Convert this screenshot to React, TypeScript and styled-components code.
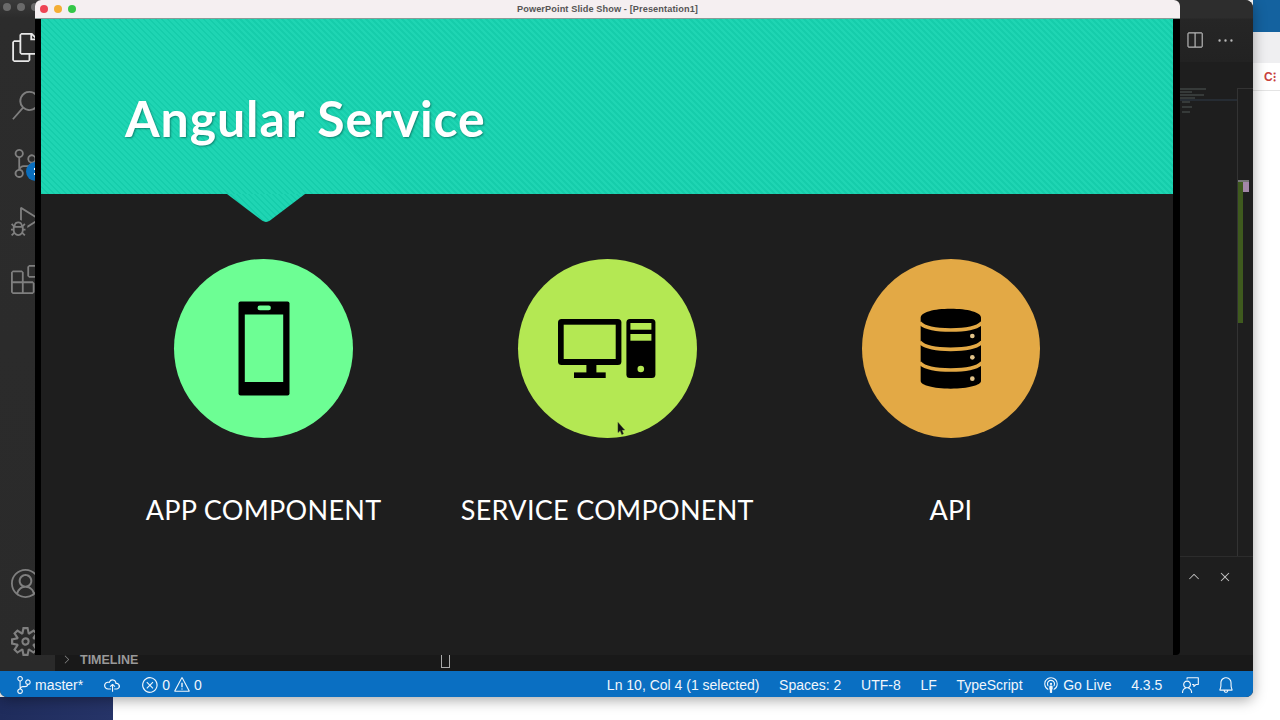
import React from "react";
import styled, { createGlobalStyle } from "styled-components";
import {
  VscFiles, VscSearch, VscSourceControl, VscDebugAlt, VscExtensions, VscAccount, VscSettingsGear,
  VscSplitHorizontal, VscEllipsis, VscChevronUp, VscClose, VscChevronRight, VscCloudUpload,
  VscError, VscWarning, VscBroadcast, VscFeedback, VscBell,
} from "react-icons/vsc";

const Global = createGlobalStyle`
  html, body { margin: 0; padding: 0; background: #fff; overflow: hidden; }
  #root { width: 1280px; height: 720px; }
`;

const Desktop = styled.div`
  position: relative;
  width: 1280px;
  height: 720px;
  overflow: hidden;
  background: #fff;
  font-family: "Liberation Sans", Arial, sans-serif;
`;

const DockCorner = styled.div`
  position: absolute;
  left: 0;
  bottom: 0;
  width: 113px;
  height: 23px;
  background: linear-gradient(90deg, #1f2c5c, #263468);
`;

const BrowserSliver = styled.div`
  position: absolute;
  left: 1253px;
  top: 0;
  width: 27px;
  height: 720px;
  display: flex;
  flex-direction: column;
`;
const BrowserTop = styled.div`
  height: 32px;
  background: #14629f;
`;
const BrowserToolbar = styled.div`
  height: 31px;
  background: #efeff1;
`;
const BrowserTab = styled.div`
  height: 27px;
  padding-left: 11px;
  border-bottom: 1px solid #e4e4e4;
  display: flex;
  align-items: center;
  font-size: 12px;
  font-weight: 700;
  color: #c8403c;
`;

const CodeWindow = styled.div`
  position: absolute;
  left: 0;
  top: 0;
  width: 1253px;
  height: 697px;
  display: flex;
  flex-direction: column;
  border-radius: 0 8px 7px 7px;
  overflow: hidden;
  background: #1e1e1e;
  box-shadow: 0 3px 14px rgba(0, 0, 0, 0.35);
`;
const CodeBody = styled.div`
  flex: 1;
  min-height: 0;
  display: flex;
`;
const ActivityBar = styled.nav`
  width: 55px;
  flex: none;
  display: flex;
  flex-direction: column;
  background: linear-gradient(180deg, #3a3a3a 0, #2c2c2c 18px, #2a2a2a 100%);
  padding: 33px 5px 15px 0;
  box-sizing: border-box;
  align-items: center;
`;
const ControlDots = styled.div`
  display: flex;
  gap: 6px;
  position: absolute;
  left: 3px;
  top: 3px;
`;
const GreyDot = styled.span`
  width: 8px;
  height: 8px;
  border-radius: 50%;
  background: #6a6a6a;
`;
const ActivityGroup = styled.div`
  display: flex;
  flex-direction: column;
  gap: 29px;
`;
const ActivitySpacer = styled.div`
  flex: 1;
`;
const ActivityIcon = styled.div<{ $active?: boolean }>`
  position: relative;
  width: 29px;
  height: 29px;
  color: ${(p) => (p.$active ? "#e8e8e8" : "#7f7f7f")};
  font-size: 29px;
  line-height: 0;
`;
const Badge = styled.span`
  position: absolute;
  left: 15px;
  top: 13px;
  width: 19px;
  height: 19px;
  border-radius: 50%;
  background: #0a6ebd;
  &::after {
    content: "";
    position: absolute;
    left: 8px;
    top: 6px;
    width: 2px;
    height: 2px;
    background: #fff;
    box-shadow: 0 5px 0 #fff;
  }
`;
const Workbench = styled.div`
  flex: 1;
  min-width: 0;
  display: flex;
  flex-direction: column;
`;
const TabStrip = styled.div`
  height: 62px;
  flex: none;
  box-sizing: border-box;
  padding: 18px 18px 0 0;
  display: flex;
  justify-content: flex-end;
  align-items: center;
  gap: 12px;
  color: #b8b8b8;
  font-size: 19px;
  background: linear-gradient(180deg, #2d2d2d 0, #2d2d2d 18px, #262626 19px, #222 62px);
`;
const EditorRow = styled.div`
  flex: 1;
  min-height: 0;
  display: flex;
  justify-content: flex-end;
  padding-top: 26px;
  background: #1e1e1e;
`;
const Minimap = styled.svg`
  width: 57px;
  height: 40px;
  flex: none;
`;
const ScrollTrack = styled.div`
  width: 16px;
  flex: none;
  box-sizing: border-box;
  border-left: 1px solid #333;
  border-top: 1px solid #333;
  padding-top: 91px;
  display: flex;
  align-items: flex-start;
`;
const OverviewBar = styled.div`
  width: 5px;
  height: 141px;
  background: #3f5a1e;
  border-top: 2px solid #777;
`;
const OverviewMark = styled.div`
  width: 6px;
  height: 10px;
  background: #a387a8;
  border-top: 2px solid #777;
`;
const PanelRow = styled.div`
  height: 99px;
  flex: none;
  box-sizing: border-box;
  border-top: 1px solid #2c2c2c;
  padding: 12px 20px 0 0;
  display: flex;
  justify-content: flex-end;
  gap: 15px;
  color: #c2c2c2;
  font-size: 16px;
  background: #1e1e1e;
`;
const TimelineRow = styled.div`
  height: 16px;
  flex: none;
  display: flex;
  align-items: center;
  padding-left: 5px;
  background: #191919;
  overflow: hidden;
`;
const TimelineChevron = styled.span`
  color: #888;
  font-size: 13px;
  line-height: 0;
  margin-top: -7px;
`;
const TimelineLabel = styled.span`
  margin: -7px 0 0 7px;
  font-size: 12.5px;
  font-weight: 700;
  color: #999;
`;
const TextCaret = styled.span`
  width: 7px;
  height: 12px;
  margin: -3px 0 0 303px;
  border: 1px solid #aaa;
  border-top: 0;
`;

const StatusBar = styled.footer`
  height: 26px;
  flex: none;
  box-sizing: border-box;
  display: flex;
  align-items: center;
  justify-content: space-between;
  background: #0a6fc2;
  color: #f1f6fb;
  font-size: 14px;
  padding: 1px 18px 0 15px;
`;
const StatusGroup = styled.div<{ $gap?: number }>`
  display: flex;
  align-items: center;
  gap: ${(p) => p.$gap ?? 19.7}px;
`;
const StatusItem = styled.span<{ $gap?: number; $font?: number }>`
  display: inline-flex;
  align-items: center;
  gap: ${(p) => p.$gap ?? 3}px;
  white-space: nowrap;
  svg { font-size: ${(p) => p.$font ?? 18}px; }
`;

const SlideWindow = styled.section`
  position: absolute;
  left: 35px;
  top: 0;
  width: 1145px;
  height: 655px;
  display: flex;
  flex-direction: column;
  background: #000;
  border-radius: 6px 6px 4px 0;
  overflow: hidden;
`;
const SlideTitleBar = styled.header`
  position: relative;
  height: 19px;
  flex: none;
  display: flex;
  align-items: center;
  justify-content: center;
  background: #f5eff1;
  border-bottom: 1px solid #8a9a96;
  box-sizing: border-box;
  font-size: 9.2px;
  font-weight: 700;
  color: #555;
  letter-spacing: 0.1px;
  padding-bottom: 1px;
`;
const Lights = styled.div`
  position: absolute;
  left: 5px;
  top: 5px;
  display: flex;
  gap: 6px;
`;
const Light = styled.span<{ $color: string }>`
  width: 8px;
  height: 8px;
  border-radius: 50%;
  background: ${(p) => p.$color};
`;
const Slide = styled.div`
  flex: 1;
  min-height: 0;
  margin: 0 7px 0 6px;
  display: flex;
  flex-direction: column;
  background: #1e1e1e;
`;
const stripes = `repeating-linear-gradient(45deg, #16cdab 0, #16cdab 2.1px, #1fd5b3 2.1px, #1fd5b3 4.243px)`;
const SlideHeader = styled.div`
  position: relative;
  height: 175px;
  flex: none;
  box-sizing: border-box;
  padding: 65px 0 0 84px;
  background: ${stripes};
`;
const SlideHeaderPointer = styled.div`
  position: absolute;
  left: 186px;
  top: 175px;
  width: 78px;
  height: 28px;
  background: ${stripes};
  clip-path: polygon(0 0, 100% 0, 43px 26.6px, 41px 27.6px, 39px 28px, 37px 27.6px, 35px 26.6px);
`;
const SlideTitle = styled.h1`
  margin: 0;
  font-family: Lato, "Liberation Sans", sans-serif;
  font-size: 50px;
  line-height: 68px;
  font-weight: 700;
  color: #fff;
  letter-spacing: 0.9px;
  text-shadow: 1px 1px 2px rgba(0, 70, 60, 0.55);
`;
const Columns = styled.div`
  display: grid;
  grid-template-columns: repeat(3, 343.7px);
  padding: 65px 0 0 50.8px;
`;
const Column = styled.div`
  display: flex;
  flex-direction: column;
  align-items: center;
  gap: 52px;
`;
const Disc = styled.div<{ $color: string }>`
  width: 178.6px;
  height: 179px;
  border-radius: 50%;
  background: ${(p) => p.$color};
  display: flex;
  align-items: center;
  justify-content: center;
`;
const ColumnLabel = styled.div`
  font-family: Lato, "Liberation Sans", sans-serif;
  font-size: 27px;
  line-height: 40px;
  letter-spacing: 0.3px;
  color: #fff;
  white-space: nowrap;
`;
const Pointer = styled.svg`
  position: absolute;
  left: 617px;
  top: 422px;
  width: 8px;
  height: 13px;
`;

const PhoneIcon = () => (
  <svg width="52" height="95" viewBox="0 0 52 95">
    <rect x="0.5" y="0.5" width="51" height="94" rx="2" fill="#000" />
    <rect x="6.8" y="13.5" width="38.4" height="67.5" fill="#6dfe94" />
    <rect x="19.5" y="4.6" width="13.4" height="4.7" rx="2.3" fill="#6dfe94" />
  </svg>
);

const ComputerIcon = () => (
  <svg width="98" height="60" viewBox="0 0 98 60">
    <rect x="0" y="0" width="63.4" height="46" rx="3.5" fill="#000" />
    <rect x="5.7" y="5.7" width="52" height="34.3" fill="#b4e853" />
    <rect x="28.4" y="46" width="10" height="8" fill="#000" />
    <rect x="16" y="53.4" width="31.7" height="5.6" fill="#000" />
    <rect x="68.4" y="0" width="29" height="59" rx="3.5" fill="#000" />
    <rect x="72.4" y="4" width="21" height="6.7" fill="#b4e853" />
    <rect x="72.4" y="15" width="21" height="6.7" fill="#b4e853" />
    <circle cx="82.8" cy="50" r="3.3" fill="#b4e853" />
  </svg>
);

const DatabaseIcon = () => (
  <svg width="62" height="82" viewBox="45 36 186 246">
    <path
      d="M47 65C47 48 87 38 137 38S228 48 228 65V255C228 267 190 278 137 278S47 267 47 255Z"
      fill="#000"
    />
    <g fill="none" stroke="#e3a945" strokeWidth="11">
      <path d="M44 80C60 98 100 102 137 102S215 98 231 80" />
      <path d="M44 138C60 156 100 160 137 160S215 156 231 138" />
      <path d="M44 200C60 218 100 222 137 222S215 218 231 200" />
    </g>
    <g fill="#e3c48a">
      <circle cx="202" cy="120" r="7" />
      <circle cx="202" cy="184" r="7" />
      <circle cx="202" cy="248" r="7" />
    </g>
  </svg>
);

export default function App() {
  return (
    <Desktop>
      <Global />
      <BrowserSliver>
        <BrowserTop />
        <BrowserToolbar />
        <BrowserTab>C⁝</BrowserTab>
      </BrowserSliver>
      <DockCorner />

      <CodeWindow>
        <ControlDots>
          <GreyDot />
          <GreyDot />
          <GreyDot />
        </ControlDots>
        <CodeBody>
          <ActivityBar>
            <ActivityGroup>
              <ActivityIcon $active><VscFiles /></ActivityIcon>
              <ActivityIcon><VscSearch /></ActivityIcon>
              <ActivityIcon><VscSourceControl /><Badge /></ActivityIcon>
              <ActivityIcon><VscDebugAlt /></ActivityIcon>
              <ActivityIcon><VscExtensions /></ActivityIcon>
            </ActivityGroup>
            <ActivitySpacer />
            <ActivityGroup>
              <ActivityIcon><VscAccount /></ActivityIcon>
              <ActivityIcon><VscSettingsGear /></ActivityIcon>
            </ActivityGroup>
          </ActivityBar>
          <Workbench>
            <TabStrip>
              <VscSplitHorizontal />
              <VscEllipsis />
            </TabStrip>
            <EditorRow>
              <Minimap viewBox="0 0 57 40">
                <g stroke="#6f7f78" strokeWidth="1" opacity="0.6">
                  <path d="M0 1H26M0 4H12M0 7H24M0 10H15M2 14H10M2 19H12M2 24H10" />
                </g>
                <path d="M0 12H57" stroke="#2f3a48" strokeWidth="1" />
              </Minimap>
              <ScrollTrack>
                <OverviewBar />
                <OverviewMark />
              </ScrollTrack>
            </EditorRow>
            <PanelRow>
              <VscChevronUp />
              <VscClose />
            </PanelRow>
            <TimelineRow>
              <TimelineChevron><VscChevronRight /></TimelineChevron>
              <TimelineLabel>TIMELINE</TimelineLabel>
              <TextCaret />
            </TimelineRow>
          </Workbench>
        </CodeBody>
        <StatusBar>
          <StatusGroup $gap={20}>
            <StatusItem $gap={2}><VscSourceControl />master*</StatusItem>
            <StatusItem><VscCloudUpload /></StatusItem>
            <StatusItem>
              <VscError />0
              <VscWarning />0
            </StatusItem>
          </StatusGroup>
          <StatusGroup>
            <span>Ln 10, Col 4 (1 selected)</span>
            <span>Spaces: 2</span>
            <span>UTF-8</span>
            <span>LF</span>
            <span>TypeScript</span>
            <StatusItem><VscBroadcast />Go Live</StatusItem>
            <span>4.3.5</span>
            <StatusGroup $gap={17}>
              <StatusItem><VscFeedback /></StatusItem>
              <StatusItem><VscBell /></StatusItem>
            </StatusGroup>
          </StatusGroup>
        </StatusBar>
      </CodeWindow>

      <SlideWindow>
        <SlideTitleBar>
          <Lights>
            <Light $color="#ee4454" />
            <Light $color="#f4ae35" />
            <Light $color="#35c748" />
          </Lights>
          PowerPoint Slide Show - [Presentation1]
        </SlideTitleBar>
        <Slide>
          <SlideHeader>
            <SlideTitle>Angular Service</SlideTitle>
            <SlideHeaderPointer />
          </SlideHeader>
          <Columns>
            <Column>
              <Disc $color="#6dfe94"><PhoneIcon /></Disc>
              <ColumnLabel>APP COMPONENT</ColumnLabel>
            </Column>
            <Column>
              <Disc $color="#b4e853"><ComputerIcon /></Disc>
              <ColumnLabel>SERVICE COMPONENT</ColumnLabel>
            </Column>
            <Column>
              <Disc $color="#e3a945"><DatabaseIcon /></Disc>
              <ColumnLabel>API</ColumnLabel>
            </Column>
          </Columns>
        </Slide>
      </SlideWindow>

      <Pointer viewBox="0 0 8 13">
        <path d="M1 0.5V10.5L3.2 8.5L4.8 12.5L6.4 11.8L4.8 8H7.6Z" fill="#111" stroke="#333" strokeWidth="0.5" />
      </Pointer>
    </Desktop>
  );
}
